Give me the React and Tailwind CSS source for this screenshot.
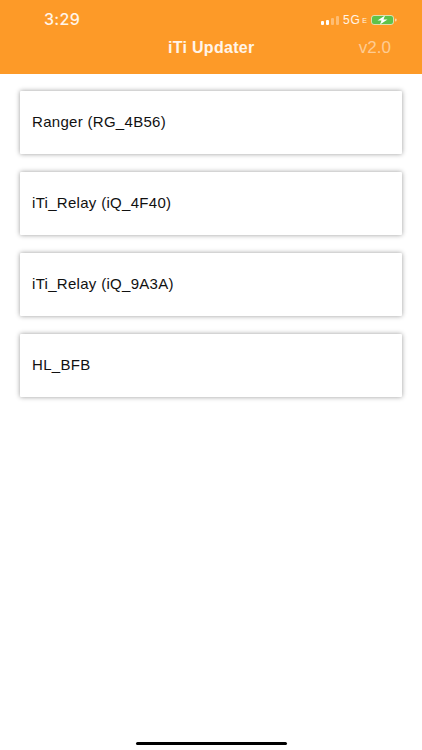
const devices = ['Ranger (RG_4B56)', 'iTi_Relay (iQ_4F40)', 'iTi_Relay (iQ_9A3A)', 'HL_BFB'];

function StatusIcons() {
  return (
    <div className="flex items-end h-[10px] mt-[2px]">
      <div className="flex items-end gap-[2px]">
        <div className="w-[3px] h-[4px] bg-white rounded-[1px]" />
        <div className="w-[3px] h-[5px] bg-white rounded-[1px]" />
        <div className="w-[3px] h-[7px] bg-white/35 rounded-[1px]" />
        <div className="w-[3px] h-[9px] bg-white/35 rounded-[1px]" />
      </div>
      <span className="ml-[4px] text-[12px] leading-[10px] text-white/90 tracking-[0.6px]">5G</span>
      <span className="ml-[2px] text-[7px] leading-[8px] text-white/90">E</span>
      <svg className="ml-[4px]" width="26" height="10" viewBox="0 0 26 10">
        <rect x="0.5" y="0.5" width="22" height="9" rx="2.5" fill="#5fc24a" stroke="#ffffff" strokeOpacity="0.6" />
        <path d="M14 0.5 L6.5 5.5 H10.5 L9 9.5 L16.5 4.5 H12.5 Z" fill="#fff" />
        <rect x="24" y="3.5" width="1.5" height="3" rx="0.7" fill="#ffffff" fillOpacity="0.6" />
      </svg>
    </div>
  );
}

export default function App() {
  return (
    <div className="w-[422px] h-[750px] bg-white flex flex-col overflow-hidden font-['Liberation_Sans',sans-serif]">
      <header className="h-[74px] bg-[#fd9a28] shrink-0 flex flex-col text-white">
        <div className="flex items-center justify-between h-[26px] mt-[6px] pl-[44px] pr-[25px]">
          <span className="text-[16px] font-['Inter',sans-serif] font-medium text-white/90 tracking-[0.3px]">3:29</span>
          <StatusIcons />
        </div>
        <div className="flex items-center justify-between h-[24px] mt-[4px] pl-[168px] pr-[31px]">
          <span className="text-[16px] font-bold text-white/90 tracking-[0.3px]">iTi Updater</span>
          <span className="text-[17px] text-white/50">v2.0</span>
        </div>
      </header>
      <main className="flex-1 flex flex-col">
        <div className="flex flex-col gap-[18px] pt-[17px] px-[20px]">
          {devices.map((name) => (
            <div key={name} className="h-[63px] bg-white rounded-[1px] shadow-[0_0_5px_rgba(0,0,0,0.4)] flex items-center pl-[12px]">
              <span className="text-[15px] text-[#111111] tracking-[0.3px]">{name}</span>
            </div>
          ))}
        </div>
        <div className="mt-auto mb-[5px] mx-auto w-[151px] h-[3px] bg-black rounded-full" />
      </main>
    </div>
  );
}
